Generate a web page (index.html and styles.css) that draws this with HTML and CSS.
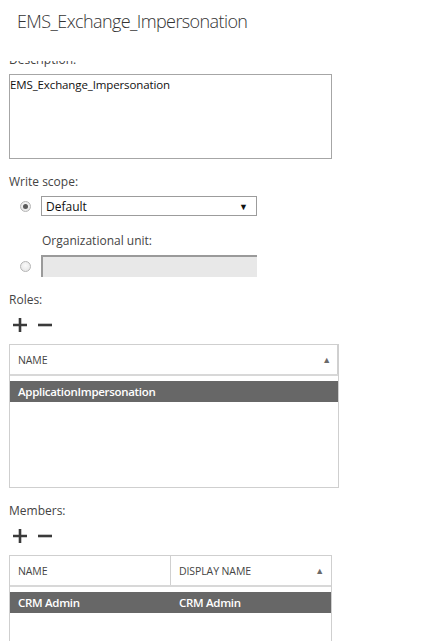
FILE: index.html
```html
<!DOCTYPE html>
<html>
<head>
<meta charset="utf-8">
<link rel="stylesheet" href="styles.css">
</head>
<body>
<div class="page">
  <h1 class="title">EMS_Exchange_Impersonation</h1>
  <div class="scroll">
    <div class="content">
      <div class="lbl desc-lbl">Description:</div>
      <div class="textarea">EMS_Exchange_Impersonation</div>

      <div class="lbl scope-lbl">Write scope:</div>
      <div class="scope-row first">
        <span class="radio checked"></span>
        <div class="select"><span>Default</span><span class="arrow">&#9660;</span></div>
      </div>
      <div class="sub-lbl">Organizational unit:</div>
      <div class="scope-row second">
        <span class="radio"></span>
        <div class="input-disabled"></div>
      </div>

      <div class="lbl roles-lbl">Roles:</div>
      <div class="toolbar">
        <svg class="ico" width="16" height="16" viewBox="0 0 16 16"><path d="M8 1v14M1 8h14" stroke="#3a3a3a" stroke-width="2.6" fill="none"/></svg>
        <svg class="ico" width="16" height="16" viewBox="0 0 16 16"><path d="M1 8h14" stroke="#3a3a3a" stroke-width="2.6" fill="none"/></svg>
      </div>
      <div class="grid roles">
        <div class="grid-head">
          <div class="col full">NAME<span class="sort">&#9650;</span></div>
        </div>
        <div class="grid-body">
          <div class="row sel"><div class="cell">ApplicationImpersonation</div></div>
        </div>
      </div>

      <div class="lbl members-lbl">Members:</div>
      <div class="toolbar">
        <svg class="ico" width="16" height="16" viewBox="0 0 16 16"><path d="M8 1v14M1 8h14" stroke="#3a3a3a" stroke-width="2.6" fill="none"/></svg>
        <svg class="ico" width="16" height="16" viewBox="0 0 16 16"><path d="M1 8h14" stroke="#3a3a3a" stroke-width="2.6" fill="none"/></svg>
      </div>
      <div class="grid members">
        <div class="grid-head">
          <div class="col hc1">NAME</div>
          <div class="col hc2">DISPLAY NAME<span class="sort">&#9650;</span></div>
        </div>
        <div class="grid-body">
          <div class="row sel"><div class="cell rc1">CRM Admin</div><div class="cell">CRM Admin</div></div>
        </div>
      </div>
    </div>
  </div>
</div>
</body>
</html>
```

FILE: styles.css
```css
html, body {
  margin: 0;
  padding: 0;
  background: #fff;
}
body {
  font-family: "Open Sans", "Noto Sans", sans-serif;
  font-size: 12px;
  color: #444;
  width: 446px;
  height: 641px;
  overflow: hidden;
}
.page {
  display: flex;
  flex-direction: column;
  height: 641px;
}
.title {
  margin: 0;
  padding: 8px 0 0 17px;
  height: 50px;
  box-sizing: border-box;
  font-weight: 300;
  font-size: 18px;
  line-height: 26px;
  color: #333;
  letter-spacing: -0.6px;
}
.scroll {
  flex: 1;
  overflow: hidden;
  margin-top: 11px;
}
.content {
  padding-left: 9px;
  margin-top: -9px;
}
.lbl, .sub-lbl {
  line-height: 16px;
  color: #444;
}
.textarea {
  margin-top: 6px;
  width: 323px;
  height: 85px;
  box-sizing: border-box;
  border: 1px solid #a6a6a6;
  padding: 2px 0 0 0;
  color: #111;
  font-size: 11.5px;
  letter-spacing: -0.12px;
  line-height: 16px;
}
.scope-lbl {
  margin-top: 15px;
}
.scope-row {
  display: flex;
  align-items: center;
}
.scope-row.first {
  margin-top: 6px;
}
.radio {
  width: 11px;
  height: 11px;
  border-radius: 50%;
  box-sizing: border-box;
  border: 1px solid #b5b5b5;
  background: radial-gradient(circle at 50% 40%, #fafafa 0, #e2e2e2 100%);
  margin: 0 10px 0 11px;
  position: relative;
  flex: none;
}
.radio.checked::after {
  content: "";
  position: absolute;
  left: 2px;
  top: 2px;
  width: 5px;
  height: 5px;
  border-radius: 50%;
  background: #5a5a5a;
}
.select {
  width: 216px;
  height: 20px;
  box-sizing: border-box;
  border: 1px solid #9c9c9c;
  display: flex;
  align-items: center;
  justify-content: space-between;
  padding: 0 8px 0 4px;
  color: #111;
}
.arrow {
  font-size: 9px;
  color: #111;
}
.sub-lbl {
  margin: 17px 0 0 33px;
}
.scope-row.second {
  margin-top: 6px;
}
.input-disabled {
  width: 216px;
  height: 22px;
  box-sizing: border-box;
  background: #e8e8e8;
  border-top: 2px solid #9a9a9a;
  border-left: 2px solid #9a9a9a;
}
.roles-lbl {
  margin-top: 15px;
}
.toolbar {
  display: flex;
  gap: 9px;
  padding-left: 3px;
  margin-top: 9px;
  height: 16px;
}
.grid {
  margin-top: 11px;
  border: 1px solid #cfcfcf;
  box-sizing: border-box;
}
.grid.roles {
  width: 330px;
  height: 144px;
}
.grid.members {
  width: 323px;
  height: 100px;
  border-bottom: none;
}
.grid-head {
  display: flex;
  height: 31px;
  border-bottom: 2px solid #d8d8d8;
  box-sizing: border-box;
}
.col {
  display: flex;
  align-items: center;
  padding-left: 8px;
  font-size: 10.5px;
  color: #444;
  box-sizing: border-box;
  letter-spacing: -0.1px;
}
.col.full {
  flex: 1;
  justify-content: space-between;
  padding-right: 6px;
  border-right: 1px solid #d0d0d0;
}
.hc1 {
  width: 161px;
  border-right: 1px solid #d0d0d0;
}
.hc2 {
  flex: 1;
  justify-content: space-between;
  padding-right: 7px;
}
.sort {
  font-size: 9px;
  color: #6a6a6a;
}
.grid-body {
  padding-top: 5px;
}
.row.sel {
  display: flex;
  height: 21px;
  align-items: center;
  background: #676767;
  color: #fff;
  font-weight: 600;
  font-size: 11.5px;
  letter-spacing: -0.3px;
}
.cell {
  padding-left: 8px;
  box-sizing: border-box;
}
.rc1 {
  width: 161px;
}
.members-lbl {
  margin-top: 15px;
}
```
